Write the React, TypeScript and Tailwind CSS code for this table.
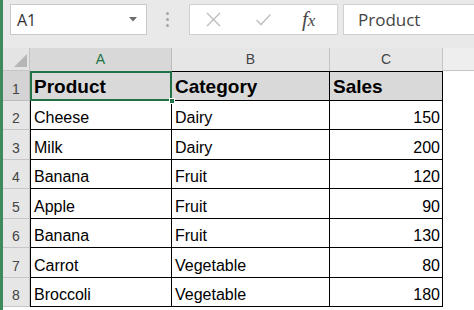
import { Fragment } from 'react';

const rows: [string, string, number][] = [
  ['Cheese', 'Dairy', 150],
  ['Milk', 'Dairy', 200],
  ['Banana', 'Fruit', 120],
  ['Apple', 'Fruit', 90],
  ['Banana', 'Fruit', 130],
  ['Carrot', 'Vegetable', 80],
  ['Broccoli', 'Vegetable', 180],
];

const Toolbar = () => (
  <div className="h-[48px] flex items-start bg-[#e9e9e9]">
    {/* name box */}
    <div className="ml-[7px] mt-[4px] w-[137px] h-[31px] bg-white border border-[#c9c9c9] flex items-center justify-between pl-[6px] pr-[9px]">
      <span className="text-[16px] text-[#333] font-['Open_Sans',sans-serif]">A1</span>
      <svg width="8" height="5" viewBox="0 0 8 5">
        <polygon points="0,0 8,0 4,4.5" fill="#6b6b6b" />
      </svg>
    </div>
    <div className="ml-[19px] mt-[12px] w-[3px] flex flex-col gap-[3px]">
      <span className="w-[3px] h-[3px] rounded-full bg-[#a6a6a6]" />
      <span className="w-[3px] h-[3px] rounded-full bg-[#a6a6a6]" />
      <span className="w-[3px] h-[3px] rounded-full bg-[#a6a6a6]" />
    </div>
    {/* cancel / enter / fx */}
    <div className="ml-[20px] mt-[4px] w-[149px] h-[31px] bg-white border border-[#d0d0d0] flex items-center">
      <svg className="ml-[15px]" width="17" height="15" viewBox="0 0 17 15">
        <path d="M2 1 L15 14 M15 1 L2 14" stroke="#bdbdbd" strokeWidth="1.4" fill="none" />
      </svg>
      <svg className="ml-[33px]" width="17" height="13" viewBox="0 0 17 13">
        <path d="M1.5 7 L6 11.5 L15.5 1.5" stroke="#c4c4c4" strokeWidth="1.6" fill="none" />
      </svg>
      <span className="ml-[30px] text-[21px] italic text-[#4a4a4a] font-['Liberation_Serif',serif] leading-none">
        f<span className="text-[17px]">x</span>
      </span>
    </div>
    <div className="ml-[5px] mt-[4px] flex-1 h-[31px] bg-white border border-r-0 border-[#d0d0d0] flex items-center pl-[14px]">
      <span className="text-[17px] text-[#444] font-['Open_Sans',sans-serif]">Product</span>
    </div>
  </div>
);

const Sheet = () => (
  <div className="flex flex-col font-['Liberation_Sans',Arial,sans-serif]">
    {/* column headers */}
    <div className="flex h-[23px] text-[14px] text-[#444]">
      <div className="w-[27px] bg-[#e4e4e4] border-r border-b border-[#c4c4c4] flex">
        <svg width="26" height="22" viewBox="0 0 26 22">
          <polygon points="11,19 24,19 24,6" fill="#b6b6b6" />
        </svg>
      </div>
      <div className="w-[142px] bg-[#d8d8d8] border-r border-[#bcbcbc] flex items-center justify-center text-[#217346]">A</div>
      <div className="w-[158px] bg-[#e6e6e6] border-r border-[#c4c4c4] flex items-center justify-center">B</div>
      <div className="w-[113px] bg-[#e6e6e6] border-r border-[#c4c4c4] flex items-center justify-center">C</div>
      <div className="flex-1 bg-[#eeeeee] border-b border-[#c8c8c8]" />
    </div>

    {/* header data row */}
    <div className="flex h-[30px]">
      <div className="w-[27px] bg-[#d4d4d4] border-r border-b border-[#bcbcbc] flex items-end justify-center pb-[4px] text-[14px] leading-none text-[#444]">
        1
      </div>
      <div className="relative w-[142px] bg-[#d9d9d9] border border-black flex items-end pl-[3px] pb-[4px] text-[19px] font-bold leading-none text-black">
        Product
        <div className="absolute -top-[1px] -left-[1px] -right-[1px] -bottom-[1px] border-2 border-[#217346]" />
        <div className="absolute -right-[4px] -bottom-[4px] w-[6px] h-[6px] bg-[#217346] border border-white" />
      </div>
      <div className="w-[158px] bg-[#d9d9d9] border-t border-r border-b border-black flex items-end pl-[3px] pb-[4px] text-[19px] font-bold leading-none text-black">
        Category
      </div>
      <div className="w-[113px] bg-[#d9d9d9] border-t border-r border-b border-black flex items-end pl-[3px] pb-[4px] text-[19px] font-bold leading-none text-black">
        Sales
      </div>
      <div className="flex-1 bg-white" />
    </div>

    {rows.map(([product, category, sales], i) => (
      <Fragment key={i}>
        <div className={i % 2 === 0 ? 'flex h-[29px]' : 'flex h-[30px]'}>
          <div className="w-[27px] bg-[#e6e6e6] border-r border-b border-[#c6c6c6] flex items-end justify-center pb-[4px] text-[14px] leading-none text-[#444]">
            {i + 2}
          </div>
          <div className="w-[142px] bg-white border-l border-r border-b border-black flex items-end pl-[3px] pb-[3px] text-[16px] leading-none text-black">
            {product}
          </div>
          <div className="w-[158px] bg-white border-r border-b border-black flex items-end pl-[3px] pb-[3px] text-[16px] leading-none text-black">
            {category}
          </div>
          <div className="w-[113px] bg-white border-r border-b border-black flex items-end justify-end pr-[2px] pb-[3px] text-[16px] leading-none text-black">
            {sales}
          </div>
          <div className="flex-1 bg-white" />
        </div>
      </Fragment>
    ))}
  </div>
);

export default function App() {
  return (
    <div className="w-[474px] h-[310px] overflow-hidden flex bg-white">
      <div className="w-[3px] bg-[#3f8a5c]" />
      <div className="flex-1 flex flex-col">
        <Toolbar />
        <Sheet />
      </div>
    </div>
  );
}
